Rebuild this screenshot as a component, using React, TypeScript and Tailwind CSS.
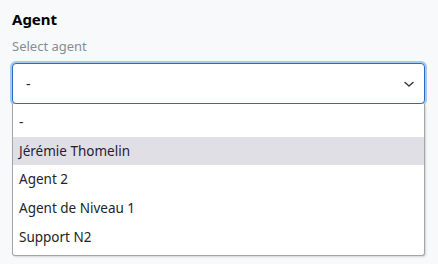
export default function App() {
  const options = ["-", "Jérémie Thomelin", "Agent 2", "Agent de Niveau 1", "Support N2"];
  return (
    <div className="h-[264px] w-[438px] bg-[#f8f9fa] px-3 pt-[9px] font-['Noto_Sans',sans-serif]">
      <h2 className="text-[15px] font-bold leading-5 text-black">Agent</h2>
      <p className="mt-[7px] text-[13px] leading-5 text-[#868e96]">Select agent</p>
      <div className="mt-[7px] w-[413px]">
        <div className="flex h-[41px] items-center justify-between rounded-[4px] border border-[#2a6cc4] bg-white pl-[13px] pr-[8px] text-[14px] text-[#212529] ring-[2px] ring-[#a8c8ee]">
          <span>-</span>
          <svg width="12" height="12" viewBox="0 0 12 12" fill="none" className="mr-[1px]">
            <path d="M2 4.5 L6 8 L10 4.5" stroke="#343a40" strokeWidth="1.5" strokeLinecap="round" strokeLinejoin="round" />
          </svg>
        </div>
        <ul className="rounded-b-[3px] border border-t-0 border-[#a5a5a5] bg-white py-1 shadow-[1px_1px_2px_rgba(0,0,0,0.15)]">
          {options.map((o, i) => (
            <li
              key={o}
              className={`flex h-[28.6px] items-center px-[6px] text-[13.5px] ${i === 1 ? "bg-[#e0dfe5] text-[#2a1a35]" : "text-[#212529]"}`}
            >
              {o}
            </li>
          ))}
        </ul>
      </div>
    </div>
  );
}
